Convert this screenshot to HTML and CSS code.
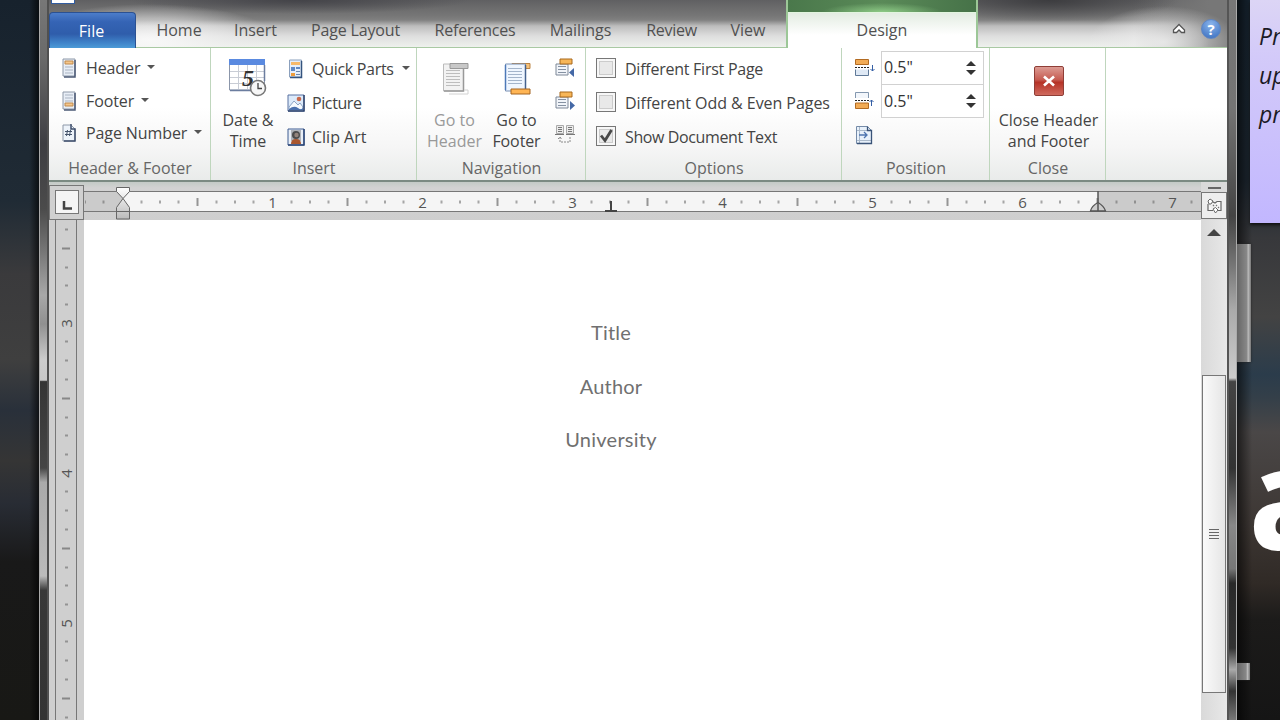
FILE: index.html
```html
<!DOCTYPE html>
<html lang="en">
<head>
    <meta charset="UTF-8">
    <title>Document editor</title>
    <link rel="stylesheet" href="styles.css">
</head>
<body>
    <div class="side side-left"></div>
    <div class="frame frame-left"></div>
    <main class="window">
        <nav class="tabs">
            <div class="app-icon"></div>
            <div class="tab file">File</div>
            <div class="tab home">Home</div>
            <div class="tab insert">Insert</div>
            <div class="tab layout">Page Layout</div>
            <div class="tab references">References</div>
            <div class="tab mailings">Mailings</div>
            <div class="tab review">Review</div>
            <div class="tab view">View</div>
            <div class="tab design"><span>Design</span></div>
            <div class="tab-tools">
                <svg width="14" height="12" viewBox="0 0 14 12"><path d="M1.5 9.5V7L7 1.5 12.500 7v2.500H9.500L7 7 4.500 9.500z" fill="#fff" stroke="#555" stroke-width="1.300"/></svg>
                <div class="help">?</div>
            </div>
        </nav>

        <section class="ribbon">
            <div class="group">
                <div class="rows tight">
                    <div class="row">
                        <svg width="16" height="20" viewBox="0 0 16 20"><path d="M2 1h12v17H2z" fill="#e8eef6" stroke="#8d98a8"/><path d="M14 2v17H3" fill="none" stroke="#4b5a75" stroke-width="1.500"/><path d="M4 3h8v3H4z" fill="#f5c68a" stroke="#c08a4c"/><path d="M4 9h8M4 12h8M4 15h8" stroke="#a9b3c2"/></svg>
                        <span class="w-header">Header</span><i class="arrow"></i>
                    </div>
                    <div class="row">
                        <svg width="16" height="20" viewBox="0 0 16 20"><path d="M2 1h12v17H2z" fill="#e8eef6" stroke="#8d98a8"/><path d="M14 2v17H3" fill="none" stroke="#4b5a75" stroke-width="1.500"/><path d="M4 12h8v3H4z" fill="#f5c68a" stroke="#c08a4c"/><path d="M4 4h8M4 7h8M4 10h8" stroke="#a9b3c2"/></svg>
                        <span class="w-footer">Footer</span><i class="arrow"></i>
                    </div>
                    <div class="row">
                        <svg width="16" height="20" viewBox="0 0 16 20"><path d="M2 2h8l4 4v12H2z" fill="#edf3fa" stroke="#8d98a8"/><path d="M10 1v5h4v12H3" fill="none" stroke="#3f4f6c" stroke-width="1.500"/><path d="M6.500 7 5.500 13M9.500 7 8.500 13M4 8.500h7M4 11.500h7" stroke="#44536b"/></svg>
                        <span class="w-number">Page Number</span><i class="arrow"></i>
                    </div>
                </div>
                <div class="label">Header &amp; Footer</div>
            </div>

            <div class="group">
                <div class="cells">
                    <div class="big date">
                        <svg width="42" height="42" viewBox="0 0 42 42">
                            <path d="M2.500 3h35v30h-35z" fill="#fff" stroke="#8b96aa"/><path d="M2 2h36v6H2z" fill="#5a8ae0"/>
                            <path d="M11.500 8v25M20.500 8v25M29.500 8v25M3 14.500h34M3 20.500h34M3 26.500h34" stroke="#c9cdd5"/>
                            <path d="M3 33.500h22M37.500 8v16" stroke="#6b7d9f" stroke-width="1.500"/>
                            <text x="15" y="29" class="five">5</text>
                            <circle cx="31" cy="31" r="7.500" fill="#f7f7f7" stroke="#777" stroke-width="1.600"/><path d="M31 26v5.500h4" fill="none" stroke="#444" stroke-width="1.300"/>
                        </svg>
                        <span>Date &amp;<br>Time</span>
                    </div>
                    <div class="rows">
                        <div class="row">
                            <svg width="18" height="20" viewBox="0 0 18 20"><path d="M2.500 1h12v17h-12z" fill="#e4eefb" stroke="#8ba0bd"/><path d="M4 3h9v3H4z" fill="#f6b96a"/><path d="M4 8h4v4H4zM9 8h4v2H9z" fill="#5f88c4"/><path d="M4 14h4v3H4z" fill="#ee9c3b"/><path d="M9 12.500h4M9 15.500h4" stroke="#6b87ad"/><path d="M14.500 2v16.500H3" fill="none" stroke="#34537e" stroke-width="1.500"/></svg>
                            <span class="w-parts">Quick Parts</span><i class="arrow"></i>
                        </div>
                        <div class="row">
                            <svg width="18" height="20" viewBox="0 0 18 20"><path d="M1 2h16v16H1z" fill="#dceafa" stroke="#5871a0"/><circle cx="12" cy="6" r="2.300" fill="#c9694a"/><path d="M2 14 7 8l4 4 2-2 3 4v3H2z" fill="#f6fafe" stroke="#8da4c4"/><path d="M2 16q5-4 9-1t5-1v3H2z" fill="#4b71ae"/><path d="M17 2v16H1" fill="none" stroke="#30466f" stroke-width="1.500"/></svg>
                            <span class="w-picture">Picture</span>
                        </div>
                        <div class="row">
                            <svg width="18" height="20" viewBox="0 0 18 20"><path d="M1 2h16v16H1z" fill="#e9eff7" stroke="#3f5d92"/><path d="M4 3h10v11H4z" fill="#aeb2b8"/><circle cx="9" cy="8" r="4" fill="#4c4c4c"/><circle cx="9.500" cy="8" r="2.200" fill="#93847c"/><path d="M4 17q0-5 5-5t5 5z" fill="#a9572f"/><path d="M17 2v16H1" fill="none" stroke="#2d4777" stroke-width="1.500"/></svg>
                            <span class="w-clip">Clip Art</span>
                        </div>
                    </div>
                </div>
                <div class="label">Insert</div>
            </div>

            <div class="group">
                <div class="cells nav-cells">
                    <div class="big off">
                        <svg width="32" height="42" viewBox="0 0 32 42"><path d="M4.500 7h20v27h-20z" fill="#f2f2f2" stroke="#bbb"/><path d="M11 6.500h18v5H11z" fill="#c8c8c8" stroke="#999"/><path d="M7 13.500h14M7 16.500h14M7 19.500h14M7 22.500h14M7 25.500h14M7 28.500h14" stroke="#bdbdbd"/><path d="M24.500 12v22H5" fill="none" stroke="#999" stroke-width="1.500"/><path d="M25 33h4v4H10" fill="none" stroke="#d2d2d2"/></svg>
                        <span>Go to<br>Header</span>
                    </div>
                    <div class="big go-footer">
                        <svg width="32" height="42" viewBox="0 0 32 42"><path d="M11 6.500h18v5H11z" fill="#f6c27a" stroke="#bc8342"/><path d="M4.500 7h20v27h-20z" fill="#eff6ff" stroke="#7890b4"/><path d="M7 11.500h14M7 14.500h14M7 17.500h14M7 20.500h14M7 23.500h14M7 26.500h14" stroke="#a3b4cb"/><path d="M24.500 8v24" stroke="#44628f" stroke-width="1.500"/><path d="M4.500 8v25" stroke="#4d79b8" stroke-width="1.500"/><path d="M10 32h19v5H10z" fill="#ffb554" stroke="#a46520"/></svg>
                        <span>Go to<br>Footer</span>
                    </div>
                    <div class="rows icon-rows">
                        <svg width="20" height="20" viewBox="0 0 20 20"><path d="M1 6h12v11H1z" fill="#f1f4f9" stroke="#7c8797"/><path d="M3 8.500h8M3 11.500h8M3 14.500h8" stroke="#8591a2"/><path d="M5 1h12v5H5z" fill="#f7b658" stroke="#a8681c"/><path d="M19 10v9l-5-4.500z" fill="#4468a6"/></svg>
                        <svg width="20" height="20" viewBox="0 0 20 20"><path d="M1 6h12v11H1z" fill="#f1f4f9" stroke="#7c8797"/><path d="M3 8.500h8M3 11.500h8M3 14.500h8" stroke="#8591a2"/><path d="M5 1h12v5H5z" fill="#f7b658" stroke="#a8681c"/><path d="M15 10v9l5-4.500z" fill="#4468a6"/></svg>
                        <svg width="20" height="20" viewBox="0 0 20 20"><path d="M1.500 1.500h7v8h-7zM11.500 1.500h7v8h-7z" fill="#ececec" stroke="#aaa"/><path d="M3 3.500h4M3 5.500h4M3 7.500h4M13 3.500h4M13 5.500h4M13 7.500h4M0 10.500h9M11 10.500h9" stroke="#777"/><path d="M5 18v-5M3 15l2-2 2 2M6 18h9v-6" fill="none" stroke="#888" stroke-dasharray="2 1"/></svg>
                    </div>
                </div>
                <div class="label">Navigation</div>
            </div>

            <div class="group options">
                <div class="rows">
                    <div class="row"><b class="check"></b><span class="w-first">Different First Page</span></div>
                    <div class="row"><b class="check"></b><span class="w-odd">Different Odd &amp; Even Pages</span></div>
                    <div class="row"><b class="check"><svg width="16" height="16" viewBox="0 0 16 16"><path d="M3 7.500 7 12.500 13.500 2" fill="none" stroke="#484848" stroke-width="2.800"/></svg></b><span class="w-show">Show Document Text</span></div>
                </div>
                <div class="label">Options</div>
            </div>

            <div class="group">
                <div class="position">
                    <svg width="21" height="20" viewBox="0 0 21 20"><path d="M1.500 1.500h13v5h-13z" fill="#f2ab55" stroke="#b26b22"/><path d="M1.500 11.500v6h13v-6" fill="#dfe9f5" stroke="#5f7998"/><path d="M1 9.500h14" stroke="#222" stroke-dasharray="2 1"/><path d="M18.500 7v6M16.500 11l2 2 2-2" fill="none" stroke="#345fa5"/></svg>
                    <div class="spin"><span>0.5"</span><i><b class="up"></b><b class="down"></b></i></div>
                    <svg width="21" height="20" viewBox="0 0 21 20"><path d="M1.500 7V1.500h13V7" fill="#f2f6fb" stroke="#8397af"/><path d="M1.500 12h13v5.500h-13z" fill="#f2ab55" stroke="#b26b22"/><path d="M1 9.500h14" stroke="#222" stroke-dasharray="2 1"/><path d="M17.500 15V9M15.500 11l2-2 2 2" fill="none" stroke="#345fa5"/></svg>
                    <div class="spin"><span>0.5"</span><i><b class="up"></b><b class="down"></b></i></div>
                    <svg width="21" height="20" viewBox="0 0 21 20"><path d="M2.500 1.500h11l4 4v13h-15z" fill="#e8f1fb" stroke="#758ba8"/><path d="M5.500 2v16M3 5.500h10M3 15.500h14" stroke="#aab9ca"/><path d="M13.500 1.500v4h4v13H3" fill="none" stroke="#3a5378" stroke-width="1.300"/><path d="M5 10h8M10 7l3 3-3 3" fill="none" stroke="#4d74b0" stroke-width="1.300"/></svg>
                </div>
                <div class="label">Position</div>
            </div>

            <div class="group">
                <div class="big close">
                    <div class="close-icon"><svg width="14" height="14" viewBox="0 0 14 14"><path d="M2 2.500l10 9M12 2.500l-10 9" stroke="#fff" stroke-width="2.600"/></svg></div>
                    <span>Close Header<br>and Footer</span>
                </div>
                <div class="label">Close</div>
            </div>
        </section>

        <section class="ruler-row">
            <div class="tab-stop"><div><svg width="12" height="12" viewBox="0 0 12 12"><path d="M2 1v7.500h8" fill="none" stroke="#444" stroke-width="2.500"/></svg></div></div>
            <svg class="ruler" width="1117" height="38" viewBox="84 182 1117 38">
                <defs>
                    <linearGradient id="knob" x2="0" y2="1"><stop offset="0" stop-color="#fff"/><stop offset="1" stop-color="#bbb"/></linearGradient>
                    <pattern id="inch" x="122.500" y="182" width="150" height="38" patternUnits="userSpaceOnUse">
                        <path d="M19 18.500v3M37.500 18.500v3M56 18.500v3M94 18.500v3M112.500 18.500v3M131 18.500v3" stroke="#555"/>
                        <path d="M75 16v8" stroke="#555" stroke-width="1.200"/>
                    </pattern>
                </defs>
                <path d="M84 191.500h1117v20.500H84z" fill="#cbcbcb"/>
                <path d="M123 191.500h975v20.500H123z" fill="#f5f5f5"/>
                <path d="M84 191.500h1117M84 211.500h1117" stroke="#777"/>
                <path d="M85 190h1116v26H85z" fill="url(#inch)"/>
                <g class="num">
                    <text x="272.500" y="207.500">1</text><text x="422.500" y="207.500">2</text><text x="572.500" y="207.500">3</text><text x="722.500" y="207.500">4</text><text x="872.500" y="207.500">5</text><text x="1022.500" y="207.500">6</text><text x="1172.500" y="207.500">7</text>
                </g>
                <path d="M116.500 187.500h13v4l-6.500 7-6.500-7zM116.500 219v-11.500l6.500-9 6.500 9V219z" fill="url(#knob)" stroke="#666"/>
                <path d="M116.500 211.500h13" stroke="#666"/>
                <path d="M611 201v10M605 211h12" stroke="#444" stroke-width="2"/>
                <path d="M1090.500 211q1-5 7.500-8.500 6 3.500 7.500 8.500z" fill="#ccc" stroke="#555" stroke-width="1.300"/>
                <path d="M1098 191v20" stroke="#555" stroke-width="1.500"/>
            </svg>
            <div class="ruler-toggle">
                <b></b>
                <div><svg width="17" height="16" viewBox="0 0 17 16"><path d="M6 3.500l3 1.500 2-1.500h4v9h-3M7 12.500H2V6" fill="#f7f7f7" stroke="#666" stroke-width="1.200"/><path d="M2 3l2-2 3 2-2 3H3zM7 11l2.500-1.500L12 12l-2.500 3z" fill="#fff" stroke="#666"/><path d="M7 7l1 1M10 7l1 1M12 9l1 1" stroke="#777" stroke-width="1.300"/></svg></div>
            </div>
        </section>

        <section class="work">
            <svg class="v-ruler" width="35" height="500" viewBox="49 220 35 500">
                <defs>
                    <pattern id="inch-v" x="49" y="323.500" width="35" height="150" patternUnits="userSpaceOnUse">
                        <path d="M16 18h3M16 37h3M16 56h3M16 94h3M16 112h3M16 131h3" stroke="#555"/>
                        <path d="M13 75h8" stroke="#555" stroke-width="1.200"/>
                    </pattern>
                </defs>
                <path d="M55.500 220v500M76.500 220v500" stroke="#777"/>
                <path d="M58 220h17v500H58z" fill="url(#inch-v)"/>
                <g class="num">
                    <text transform="translate(72 323.500) rotate(-90)">3</text>
                    <text transform="translate(72 473.500) rotate(-90)">4</text>
                    <text transform="translate(72 623.500) rotate(-90)">5</text>
                </g>
            </svg>
            <article class="page">
                <p class="w-title">Title</p>
                <p class="w-author">Author</p>
                <p class="w-university">University</p>
            </article>
            <div class="scrollbar">
                <b class="scroll-up"></b>
                <div class="thumb"><i></i></div>
            </div>
        </section>
    </main>
    <div class="frame frame-right"></div>
    <div class="side side-right">
        <div class="note"><span>Pr</span><span>up</span><span>pr</span></div>
        <div class="edge edge-long"></div>
        <div class="logo">a</div>
        <div class="edge edge-short"></div>
    </div>
</body>
</html>
```
FILE: styles.css
```css
* {
    box-sizing: border-box;
}

body {
    margin: 0;
    width: 1280px;
    height: 720px;
    overflow: hidden;
    display: flex;
    font-family: "Open Sans", sans-serif;
    font-size: 16px;
    color: #444;
    background: #222;
}

svg {
    display: block;
    flex: none;
}

/* desktop and window frame */
.side-left {
    width: 39px;
    background: linear-gradient(90deg, transparent 75%, rgba(0, 0, 0, 0.65)), linear-gradient(#17222d, #202b35 28%, #3a3a3c 38%, #3f3f3f 50%, #29303a 57%, #353535 64%, #282c34 70%, #191919 78%, #181815);
}

.frame {
    width: 10px;
    border-left: 1px solid #aaa;
    border-right: 2px solid #505050;
}

.frame-left {
    background: linear-gradient(#777, #6a6a6a 8%, #3e3e42 20%, #4b4b4b 29%, #777 35%, #a8a8a8 41%, #909090 45%, #ccc 50%, #c8c8c8 52.800%, #353535 53%, #454545 65%, #aaa 67%, #bbb 80%, #383838 82%, #333);
}

.frame-right {
    border-left: 2px solid #555;
    border-right: 1px solid #aaa;
    background: linear-gradient(#777, #747474 15%, #444 30%, #777 37%, #aaa 43%, #ccc 52.500%, #444 53%, #333 65%, #888 73%, #777 79%, #292929 81%, #333 90%, #aaa 93%, #333 96%, #777);
}

.side-right {
    width: 43px;
    position: relative;
    overflow: hidden;
    background: linear-gradient(90deg, rgba(0, 0, 0, 0.6), transparent 35%), linear-gradient(#172532, #1d2731 25%, #37383b 33%, #434343 44%, #2b3c4b 52%, #333f49 55%, #4a4747 60%, #3e3835 72%, #302a26 81%, #1c1b1a 86%, #151515);
}

.note {
    position: absolute;
    left: 13px;
    top: 0;
    width: 40px;
    height: 223px;
    padding: 17px 0 0 9px;
    background: linear-gradient(#dcd5f5, #d3caf9 25%, #c2b7ff);
    box-shadow: 0 2px 3px #111;
    color: #1b1a25;
    font-size: 23px;
    font-style: italic;
    line-height: 39px;
}

.note span {
    display: block;
}

.edge {
    position: absolute;
    left: 0;
    width: 14px;
    background: linear-gradient(90deg, #666, #888 70%, #bbb 80%, #777);
    box-shadow: 0 0 2px #222;
}

.edge-long {
    top: 244px;
    height: 118px;
}

.edge-short {
    top: 663px;
    width: 13px;
    height: 17px;
}

.logo {
    position: absolute;
    left: 11px;
    top: 399px;
    color: #fff;
    font-size: 141px;
    font-weight: 700;
    line-height: 193px;
}

.window {
    width: 1178px;
    display: flex;
    flex-direction: column;
}

/* tab strip */
.tabs {
    position: relative;
    height: 48px;
    display: flex;
    border-bottom: 1px solid #a9c9a3;
    background:
        radial-gradient(ellipse 75px 36px at 1115px 42px, rgba(245, 245, 245, 0.75), rgba(235, 235, 235, 0.5) 50%, transparent),
        radial-gradient(ellipse 130px 36px at 100px 40px, rgba(250, 250, 250, 0.9), rgba(240, 240, 240, 0.5) 60%, transparent),
        radial-gradient(ellipse 170px 14px at 250px 0, #434348, transparent),
        radial-gradient(ellipse 130px 22px at 1000px 0, #3c3c3f, transparent),
        linear-gradient(90deg, transparent 1085px, #777 1160px),
        linear-gradient(#606062, #777 16px, #808080 20px, #bdbdbd 26px, #dedede 36px, #eef1ed 47px);
}

.app-icon {
    position: absolute;
    left: 2px;
    top: 0;
    width: 24px;
    height: 4px;
    background: #fff;
    border: 1px solid #315ca0;
    border-top: 0;
}

.tab {
    display: flex;
    justify-content: center;
    padding-top: 19px;
    line-height: 22px;
    color: #505050;
}

.file {
    width: 87px;
    height: 36px;
    margin-top: 12px;
    padding: 7px 2px 0 0;
    color: #fff;
    border: 1px solid #2b5192;
    border-bottom: 0;
    border-radius: 4px 4px 0 0;
    background: linear-gradient(#4c7dca, #3564b5 25%, #2f5dab 60%, #3f83c9 85%, #4c9bd7);
}

.home { width: 86px; }
.insert { width: 67px; }
.layout { width: 133px; letter-spacing: -0.15px; }
.references { width: 106px; letter-spacing: -0.2px; }
.mailings { width: 105px; }
.review { width: 77px; letter-spacing: -0.3px; }
.view { width: 76px; }

.design {
    width: 192px;
    height: 48px;
    padding: 12px 0 0;
    border-left: 2px solid #9cc797;
    border-right: 2px solid #9cc797;
    background: radial-gradient(ellipse 60px 9px at 50% 12px, #8cc985, transparent), linear-gradient(90deg, #4a784b, #5a8a58 50%, #467248);
}

.design span {
    flex: 1;
    padding-top: 6px;
    text-align: center;
    border-top: 1px solid #e2f5df;
    background: linear-gradient(#e3ece2, #fff 22px);
}

.tab-tools {
    flex: 1;
    display: flex;
    justify-content: flex-end;
    align-items: center;
    gap: 15px;
    padding: 11px 6px 0 0;
}

.help {
    width: 20px;
    height: 20px;
    border: 1px solid #5f85c1;
    border-radius: 50%;
    background: radial-gradient(circle at 50% 25%, #8ab5ec, #386cbd);
    color: #fff;
    font-size: 15px;
    font-weight: 700;
    line-height: 18px;
    text-align: center;
}

/* ribbon */
.ribbon {
    height: 134px;
    display: grid;
    grid-template-columns: 162px 206px 169px 256px 148px 116px;
    border-bottom: 2px solid #7b8a82;
    background: linear-gradient(#fff 45%, #f6f6f6 75%, #e9ebea);
}

.group {
    display: flex;
    flex-direction: column;
    justify-content: space-between;
    border-right: 1px solid #bfd6bd;
}

.label {
    height: 23px;
    line-height: 22px;
    text-align: center;
    color: #666;
    padding-left: 1px;
}

.rows {
    display: flex;
    flex-direction: column;
    padding-top: 4px;
}

.row {
    height: 34px;
    display: flex;
    align-items: center;
    white-space: nowrap;
}

.row span {
    margin-left: 7px;
}

.tight {
    padding: 4px 0 0 12px;
}

.tight .row {
    height: 32.500px;
}

.tight .row span {
    margin-left: 9px;
}

.w-header,
.w-footer,
.w-number {
    letter-spacing: -0.1px;
}

.w-parts {
    letter-spacing: -0.3px;
}

.w-picture {
    letter-spacing: -0.4px;
}

.w-first {
    letter-spacing: -0.25px;
}

.w-odd {
    letter-spacing: -0.05px;
}

.w-show {
    letter-spacing: -0.38px;
}

.arrow {
    margin: -2px 0 0 7px;
    border: 4px solid transparent;
    border-top-color: #555;
    border-bottom: 0;
}

.w-parts + .arrow {
    margin-left: 8px;
}

.cells {
    display: flex;
}

.big {
    display: flex;
    flex-direction: column;
    align-items: center;
    padding-top: 9px;
    line-height: 21px;
    text-align: center;
}

.big span {
    margin-top: 11px;
    white-space: nowrap;
}

.date {
    width: 76px;
    padding-right: 2px;
}

.five {
    font: italic 700 24px "Liberation Serif", serif;
    fill: #333;
}

.nav-cells .big {
    width: 62px;
}

.nav-cells .big:first-child {
    width: 75px;
}

.nav-cells .go-footer {
    padding-right: 13px;
}

.nav-cells .go-footer span {
    letter-spacing: -0.1px;
}

.off {
    color: #999;
}

.icon-rows {
    gap: 13px;
    padding: 10px 0 0 1px;
}

.options .rows {
    padding-left: 10px;
}

.check {
    width: 20px;
    height: 20px;
    padding: 1px;
    margin-top: -2px;
    border: 1px solid #777;
    background: #e9e9e9;
    box-shadow: inset 0 0 0 2px #f7f7f7, inset 0 0 0 3px #ccc;
}

.options .row span {
    margin-left: 9px;
}

.position {
    display: grid;
    grid-template-columns: 27px 103px;
    grid-auto-rows: 33.500px;
    align-items: center;
    padding: 3px 0 0 12px;
}

.spin {
    height: 34px;
    display: flex;
    justify-content: space-between;
    align-items: center;
    padding: 0 7px 1px 2px;
    border: 1px solid #d1d1d1;
    background: #fff;
    color: #333;
}

.spin i {
    display: flex;
    flex-direction: column;
    gap: 4px;
    padding-top: 1px;
}

.up,
.down {
    border: 5px solid transparent;
    border-top: 0;
    border-bottom-color: #333;
}

.down {
    border-top: 5px solid #333;
    border-bottom: 0;
}

.close {
    padding: 18px 0 0 2px;
}

.close-icon {
    width: 30px;
    height: 30px;
    display: grid;
    place-items: center;
    border: 1px solid #8f3e37;
    border-radius: 2px;
    background: linear-gradient(#dc9b93, #c65c52 45%, #b63327 55%, #cf6a5e);
}

.close span {
    margin-top: 14px;
}

/* rulers */
.ruler-row {
    height: 38px;
    display: flex;
    background: linear-gradient(#c3cac6, #d2d2d2 6px, #cecece);
}

.tab-stop {
    width: 35px;
    height: 35px;
    margin-top: 3px;
    padding: 4px 5px;
    border: 1px solid #777;
    background: #d0d0d0;
}

.tab-stop div {
    width: 24px;
    height: 24px;
    padding: 9px 0 0 6px;
    border: 1px solid #777;
    background: #f5f5f5;
}

.num {
    font-size: 15px;
    fill: #555;
    text-anchor: middle;
}

.ruler-toggle {
    width: 26px;
    padding-top: 5px;
    background: #dadada;
}

.ruler-toggle b {
    display: block;
    width: 13px;
    height: 2px;
    margin: 0 auto 3px;
    background: #666;
}

.ruler-toggle div {
    height: 27px;
    display: grid;
    place-items: center;
    border: 1px solid #777;
    background: #eee;
}

.work {
    height: 500px;
    display: flex;
    background: #fff;
}

.v-ruler {
    background: #cfcfcf;
}

.page {
    width: 1117px;
    padding: 98px 63px 0 0;
    font-family: Lato, sans-serif;
    font-size: 20px;
    color: #707070;
    text-align: center;
}

.page p {
    margin: 0;
    height: 53.500px;
    line-height: 28px;
}

.w-title,
.w-author {
    letter-spacing: 0.2px;
}

.w-university {
    letter-spacing: 0.25px;
}

.scrollbar {
    width: 26px;
    padding-right: 1px;
    display: flex;
    flex-direction: column;
    align-items: center;
    background: linear-gradient(90deg, #d9d9d9, #e8e8e8);
}

.scroll-up {
    margin: 9px 0 139px;
    border: 7px solid transparent;
    border-top: 0;
    border-bottom: 7px solid #444;
}

.thumb {
    width: 24px;
    height: 318px;
    display: grid;
    place-items: center;
    border: 1px solid #777;
    background: linear-gradient(90deg, #fafafa, #e5e5e5);
}

.thumb i {
    width: 10px;
    height: 10px;
    background: repeating-linear-gradient(#666 0 1px, #eee 1px 3px);
}
```
